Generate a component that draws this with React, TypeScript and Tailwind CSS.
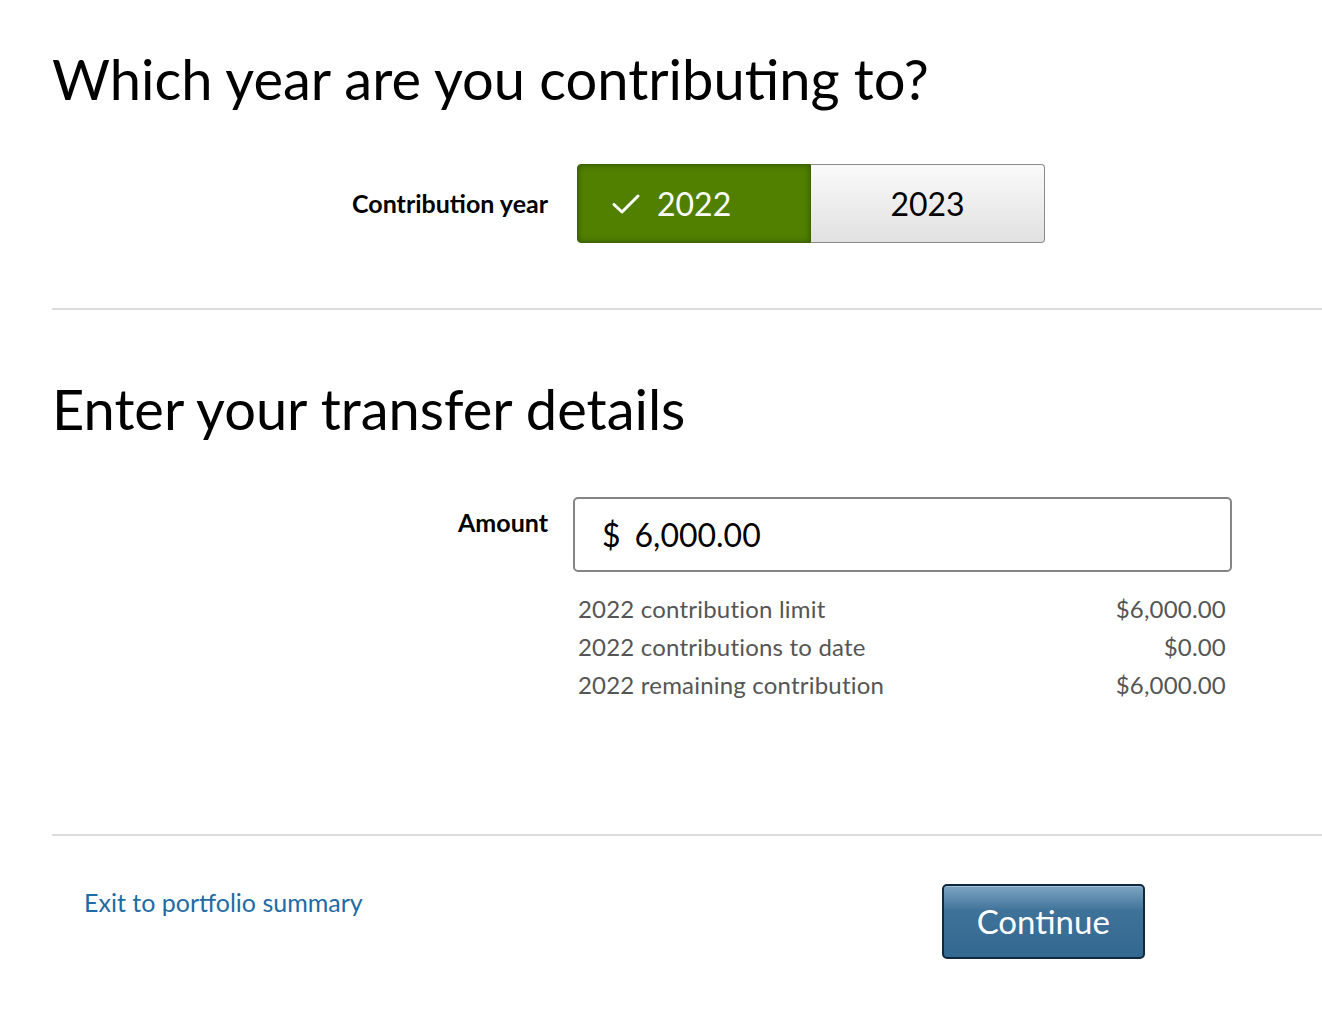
import React from "react";

export default function App() {
  const rows = [
    ["2022 contribution limit", "$6,000.00"],
    ["2022 contributions to date", "$0.00"],
    ["2022 remaining contribution", "$6,000.00"],
  ];
  return (
    <div className="w-[1322px] h-[1020px] bg-white text-black overflow-hidden" style={{ fontFamily: "Lato, 'Noto Sans', sans-serif" }}>
      <div className="pl-[52px]">
        <h1 className="pt-[44px] text-[56px] leading-[70px] font-normal">Which year are you contributing to?</h1>
        <div className="flex items-center mt-[50px]">
          <div className="w-[496px] text-right text-[25px] font-bold">Contribution year</div>
          <div className="ml-[29px] grid grid-cols-2 h-[79px] w-[468px]">
            <button className="flex items-center justify-start pl-[33px] gap-[16px] rounded-l-[4px] bg-[#518000] border border-[#3d6200] text-white text-[32px] shadow-[inset_0_0_6px_rgba(0,0,0,0.35)]">
              <svg width="30" height="24" viewBox="0 0 30 24" fill="none" stroke="white" strokeWidth="3" strokeLinecap="round" strokeLinejoin="round"><path d="M3 12.5 L11 20 L27 4" /></svg>
              <span>2022</span>
            </button>
            <button className="flex items-center justify-center rounded-r-[4px] border border-l-0 border-[#8a8a8a] bg-gradient-to-b from-[#fafafa] to-[#e1e1e1] text-[32px] text-black">2023</button>
          </div>
        </div>
        <div className="mt-[65px] h-[2px] bg-[#dcdcdc]" />
        <h2 className="mt-[64px] text-[56px] leading-[70px] font-normal">Enter your transfer details</h2>
        <div className="flex mt-[53px]">
          <div className="w-[496px] text-right text-[25px] font-bold pt-[7px]">Amount</div>
          <div className="ml-[25px] w-[659px]">
            <div className="h-[75px] border-2 border-[#858585] rounded-[5px] flex items-center pl-[27px] text-[32px]">
              <span>$</span><span className="ml-[14px]">6,000.00</span>
            </div>
            <div className="mt-[18px] pl-[5px] pr-[6px] text-[24px] tracking-[0.2px] text-[#555555]">
              {rows.map(([a, b]) => (
                <div key={a} className="flex justify-between h-[38px] items-center">
                  <span>{a}</span>
                  <span>{b}</span>
                </div>
              ))}
            </div>
          </div>
        </div>
        <div className="mt-[130px] h-[2px] bg-[#dcdcdc]" />
        <div className="flex items-start mt-[48px]">
          <a className="ml-[32px] mt-[0px] text-[25px] text-[#1f6ba5]" href="#">Exit to portfolio summary</a>
          <button className="ml-[579px] w-[203px] h-[75px] rounded-[5px] border-2 border-[#0f2a40] text-white text-[33px] shadow-[inset_0_1px_0_rgba(255,255,255,0.3)]" style={{ backgroundImage: "linear-gradient(to bottom, #7ea5c2 0%, #3f7299 35%, #336890 100%)" }}>Continue</button>
        </div>
      </div>
    </div>
  );
}
